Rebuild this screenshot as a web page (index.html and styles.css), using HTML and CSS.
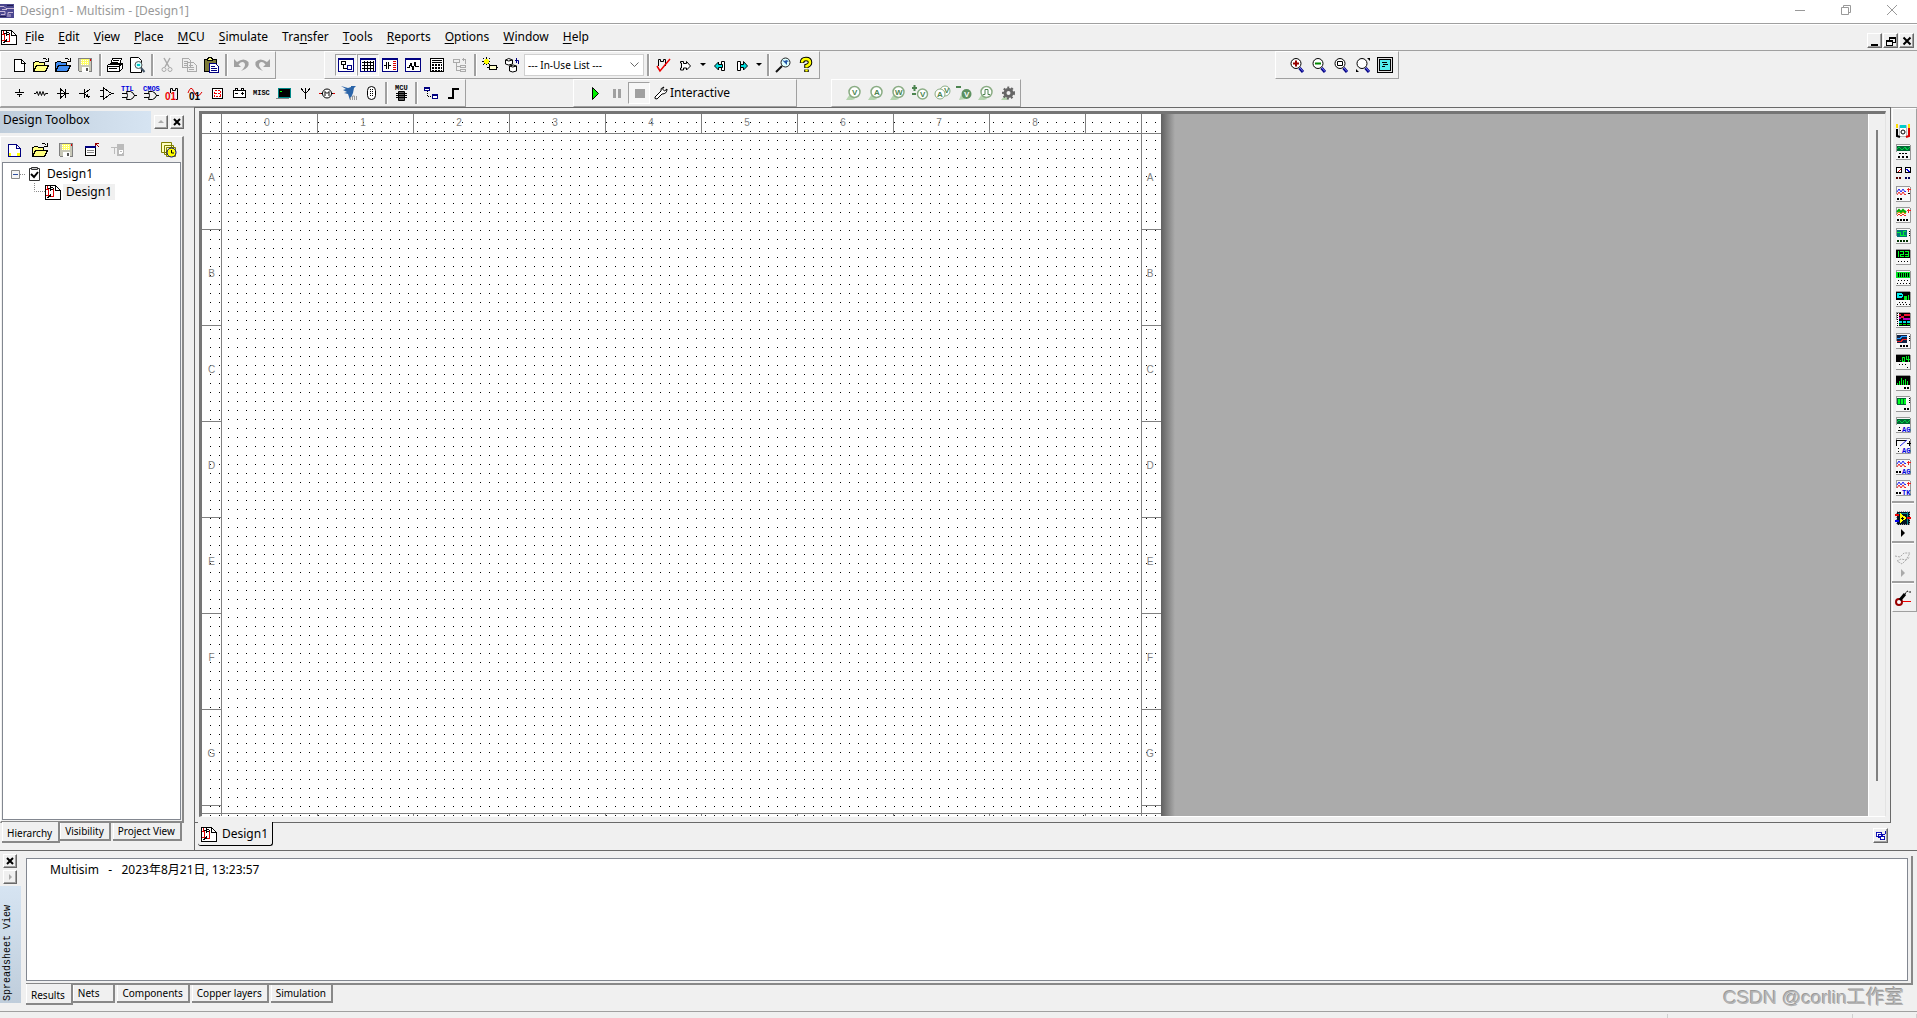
FILE: index.html
```html
<!DOCTYPE html>
<html lang="en">
<head>
<meta charset="utf-8">
<title>Design1 - Multisim - [Design1]</title>
<link rel="stylesheet" href="styles.css">
</head>
<body>
<svg class="sprite" aria-hidden="true">
  <symbol id="schematic" viewBox="0 0 16 16"><path fill="#fff" stroke="#000" d="M.5 1.500h10l5 5v9H.5z"/><path fill="none" stroke="#000" d="M10.500 1.500v5h5"/><path fill="none" stroke="#d00" d="M2.500 2v3M1 5.500h2v6H1M5 12.500h3.500v-7H6"/><path fill="none" stroke="#000" d="M3 4.500h2M5.500 2.500v4l3-2zM2.500 14l3-3M5.500 10v3"/></symbol>
  <symbol id="open" viewBox="0 0 16 16"><path d="M.5 14V5.500h1l1-1h3l1 1h5V8" stroke="#000"/><path d="M.5 14.500 3.500 8.500h12l-3 6z" stroke="#000"/><path d="M9.500 2.500q2-2 4 0l1 1M15.500 1v3.500H12" fill="none" stroke="#000"/></symbol>
  <symbol id="save" viewBox="0 0 16 16"><path fill="#c8c8b8" stroke="#808080" d="M1.500 1.500h13v13h-12l-1-1z"/><path fill="#ff6" d="M4 2h8v6H4z"/><path stroke="#fff" stroke-dasharray="1 1" d="M4 3.500h8M4 5.500h8M4 7.500h8"/><path fill="#fff" d="M5 10h7v5H5z"/><path fill="#555" d="M9 11h2v3H9z"/><path fill="#d00" d="M13 2h1v2h-1z"/></symbol>
  <symbol id="lens" viewBox="0 0 16 16"><circle cx="7" cy="6.500" r="5" fill="#fff" stroke="#000"/><path stroke="#000080" stroke-width="3" d="m10.500 11 3.500 4"/><path stroke="#77f" d="m11 11 3 3.500"/></symbol>
  <symbol id="probe" viewBox="0 0 16 16"><path fill="#b4d4ae" d="m0 15 4-6 5 5-3 1z"/><circle cx="8.500" cy="7" r="5.500" fill="#fff" stroke="#8aac84" stroke-width="1.500"/></symbol>
  <symbol id="meter" viewBox="0 0 16 16"><path fill="#f8f8f8" d="M1 1h14v14H1z"/><path fill="none" stroke="#999" d="M1 15.500h14.500V1M1 .5h14M1.500 1v7"/></symbol>
</svg>

<header class="titlebar">
  <svg class="icon" viewBox="0 0 16 16"><path fill="#4b4790" d="M0 1h14v14H0z"/><path fill="none" stroke="#c8b8d8" d="M0 3.500h4l2 2h8M0 8.500h5v3H1M8 14V9.500h5M2 6.500h5M10 14v-3"/><path stroke="#201c50" d="M0 13.500h6M7 2.500h6"/></svg>
  <h1 class="title">Design1 - Multisim - [Design1]</h1>
  <div class="window-controls">
    <button aria-label="Minimize"><svg class="icon" viewBox="0 0 16 16"><path stroke="#999" d="M3 8.500h10"/></svg></button>
    <button aria-label="Restore"><svg class="icon" viewBox="0 0 16 16"><path fill="none" stroke="#999" d="M3.500 5.500h7v7h-7zM5.500 5V3.500h7v7H11"/></svg></button>
    <button aria-label="Close"><svg class="icon" viewBox="0 0 16 16"><path stroke="#999" d="m3 3 10 10M13 3 3 13"/></svg></button>
  </div>
</header>

<nav class="menubar">
  <svg class="icon px"><use href="#schematic"/></svg>
  <ul class="menus">
    <li><button><u>F</u>ile</button></li><li><button><u>E</u>dit</button></li><li><button><u>V</u>iew</button></li><li><button><u>P</u>lace</button></li><li><button><u>M</u>CU</button></li><li><button><u>S</u>imulate</button></li><li><button>Tra<u>n</u>sfer</button></li><li><button><u>T</u>ools</button></li><li><button><u>R</u>eports</button></li><li><button><u>O</u>ptions</button></li><li><button><u>W</u>indow</button></li><li><button><u>H</u>elp</button></li>
  </ul>
  <div class="child-controls">
    <button class="bevel" aria-label="Minimize document"><svg viewBox="0 0 12 12"><path fill="#000" d="M2 9h7v2H2z"/></svg></button>
    <button class="bevel" aria-label="Restore document"><svg viewBox="0 0 12 12" class="px"><path fill="none" stroke="#000" d="M4.500 5V2.500h6v5H8M4 3h7M1.500 5.500h6v5h-6zM1 6h7"/></svg></button>
    <button class="bevel" aria-label="Close document"><svg viewBox="0 0 12 12"><path stroke="#000" stroke-width="2" d="m2.500 2.500 7 7M9.500 2.500l-7 7"/></svg></button>
  </div>
</nav>

<div class="toolrow">
  <div class="group standard" role="toolbar" aria-label="Standard">
    <button aria-label="New"><svg class="icon px" viewBox="0 0 16 16"><path fill="#fff" stroke="#000" d="M3.500 2.500h7l3 3v9h-10z"/><path fill="none" stroke="#000" d="M10.500 2v4h4"/></svg></button>
    <button aria-label="Open"><svg class="icon px" fill="#ffff80"><use href="#open"/></svg></button>
    <button aria-label="Open samples"><svg class="icon px" fill="#3f8cf3"><use href="#open"/></svg></button>
    <button aria-label="Save"><svg class="icon px"><use href="#save"/></svg></button>
    <span class="sep"></span>
    <button aria-label="Print"><svg class="icon px" viewBox="0 0 16 16"><path fill="#fff" stroke="#000" d="M5.500 1.500h9l-2 6h-9zM.5 8.500l3-2h12v5l-3 3H.5z"/><path fill="none" stroke="#000" d="M6 3.500h6M5 5.500h6M0 9.500h12.500v5M12 9.500l3-3M2 11.500h8"/></svg></button>
    <button aria-label="Print preview"><svg class="icon" viewBox="0 0 16 16"><path fill="#fff" stroke="#000" d="M1.500.5h8l3 3v12h-11z"/><circle cx="9.500" cy="8" r="3.500" fill="#cff" stroke="#555"/><path fill="#0cc" d="M8 7h3v2H8z"/><path stroke="#456" stroke-width="2" d="m12 11 3.500 4"/></svg></button>
    <span class="sep"></span>
    <button aria-label="Cut" disabled><svg class="icon" viewBox="0 0 16 16"><path fill="none" stroke="#aaa" stroke-width="1.500" d="m5 1 5 9M11 1 6 10"/><circle cx="5" cy="12.500" r="2" fill="none" stroke="#aaa"/><circle cx="11" cy="12.500" r="2" fill="none" stroke="#aaa"/></svg></button>
    <button aria-label="Copy" disabled><svg class="icon px" viewBox="0 0 16 16"><path fill="#eee" stroke="#aaa" d="M1.500 1.500h6l2 2v7h-8zM6.500 5.500h6l3 3v6h-9z"/><path stroke="#aaa" d="M3 4.500h4M3 6.500h3M3 8.500h3M8 8.500h4M8 10.500h5M8 12.500h5"/></svg></button>
    <button aria-label="Paste"><svg class="icon px" viewBox="0 0 16 16"><path fill="#7d7a38" stroke="#000" d="M1.500 2.500h12v12h-12z"/><path fill="#ff8" stroke="#000" d="M4.500 3.500v-2h1v-1h3v1h1v2z"/><path fill="#fff" stroke="#000080" d="M6.500 6.500h6l3 3v6h-9z"/><path stroke="#000080" d="M8 9.500h4M8 11.500h6M8 13.500h6"/></svg></button>
    <span class="sep"></span>
    <button aria-label="Undo" disabled><svg class="icon" viewBox="0 0 16 16"><path fill="#a0a0a0" d="M1 2v8h7L5.500 7.500Q9 3.500 11.500 6q2 3-3.500 8 9-3 7.500-9Q11 0 4 5z"/></svg></button>
    <button aria-label="Redo" disabled><svg class="icon" viewBox="0 0 16 16"><path fill="#a0a0a0" d="M15 2v8H8l2.500-2.500Q7 3.500 4.500 6q-2 3 3.500 8-9-3-7.500-9Q5 0 12 5z"/></svg></button>
  </div>
  <div class="group main-tools" role="toolbar" aria-label="Main">
    <button class="pressed" aria-label="Design Toolbox"><svg class="icon px" viewBox="0 0 16 16"><path fill="#fff" stroke="#000080" d="M.5 1.500h15v13H.5z"/><path stroke="#000080" d="M0 2.500h16"/><path fill="#fff" stroke="#000" d="M3.500 4.500h4v3h-4zM5.500 8v3.500H9"/><path fill="#fff" stroke="#000080" d="M9.500 8.500h4v4h-4z"/></svg></button>
    <button class="pressed" aria-label="Spreadsheet View"><svg class="icon px" viewBox="0 0 16 16"><path fill="#fff" stroke="#000080" d="M.5 1.500h15v13H.5z"/><path stroke="#000080" d="M0 2.500h16"/><path stroke="#000" d="M2 5.500h12M2 8.500h12M2 11.500h12M4.500 4v10M7.500 4v10M10.500 4v10M13.500 4v10"/></svg></button>
    <button aria-label="SPICE Netlist Viewer"><svg class="icon px" viewBox="0 0 16 16"><path fill="#fff" stroke="#000080" d="M.5 1.500h15v13H.5z"/><path stroke="#000080" d="M0 2.500h16"/><path stroke="#000" d="M2 8.500h2M4.500 5v7M6.500 5v7M7 8.500h2"/><path stroke="#d00" stroke-width="3" stroke-dasharray="1 1" d="M12.500 4v10"/></svg></button>
    <button class="wide" aria-label="Grapher"><svg class="icon px" viewBox="0 0 16 16"><path fill="#fff" stroke="#000080" d="M.5 1.500h15v13H.5z"/><path stroke="#000080" d="M0 2.500h16"/><path fill="none" stroke="#000" d="M2 10.500h2l2-4 2 6 2-7 1 4h3"/></svg></button>
    <button class="wide" aria-label="Postprocessor"><svg class="icon px" viewBox="0 0 16 16"><path fill="#fff" stroke="#000" d="M1.500 1.500h13v13h-13z"/><path fill="none" stroke="#000" d="M3 5.500h10M3 3.500h10"/><path stroke="#000" stroke-width="2" stroke-dasharray="2 1" d="M3 8h10M3 11h10M3 13.500h10"/></svg></button>
    <button aria-label="Parent sheet" disabled><svg class="icon px" viewBox="0 0 16 16"><path fill="none" stroke="#aaa" d="M1.500 2.500h6v3h-6zM4.500 6v7.500H8M4 9.500h4M8.500 8.500h5v2h-5zM8.500 12.500h5v2h-5zM13.500 7V2.500H10M11.500 1v3"/></svg></button>
    <span class="sep"></span>
    <button aria-label="Component wizard"><svg class="icon px" viewBox="0 0 16 16"><path stroke="#000" stroke-dasharray="2 1" d="M4.500 0v9M0 4.500h9M1 1l7 7M8 1 1 8"/><circle cx="4.500" cy="4.500" r="2.500" fill="#ff0"/><path fill="#ffc" stroke="#000" d="M7.500 8.500h7v4h-7zM5 10.500h2M15 10.500h1"/></svg></button>
    <button aria-label="Database manager"><svg class="icon" viewBox="0 0 16 16"><path fill="#fff" stroke="#000" d="M1.500 3v4q3 2 7 0V3q-4-3-7 0 3 2 7 0M5.500 9v5q3 2 7 0V9q-3-2-7 0 3 2 7 0"/><path fill="none" stroke="#000080" d="M11 3.500h3.500V7M12.500 1v5"/></svg></button>
    <select class="inuse" aria-label="In-use list"><option>--- In-Use List ---</option></select>
    <span class="sep"></span>
    <button aria-label="Electrical rules check"><svg class="icon" viewBox="0 0 16 16"><path fill="none" stroke="#000" d="M3.500 9V2.500h2v2h3v-2h2V9"/><path fill="none" stroke="#e00" stroke-width="1.500" d="m2 9 3 5L15 2"/></svg></button>
    <button class="wide" aria-label="Transfer to Ultiboard"><svg class="icon" viewBox="0 0 16 16"><path fill="#fff" stroke="#000" d="M2.500 4.500h3v2h3v-2l4 4.500-4 4v-2h-3v2h-3v-2h1v-5h-1z"/></svg></button>
    <button class="drop" aria-label="Transfer options"></button>
    <button class="wide" aria-label="Backannotate"><svg class="icon" viewBox="0 0 16 16"><path fill="#fff" stroke="#000" d="M9.500 4.500h3v9h-3z"/><path fill="#0dd" stroke="#000" d="m2.500 9 4-4v2.500h4v3h-4V13z"/></svg></button>
    <button aria-label="Forward annotate"><svg class="icon" viewBox="0 0 16 16"><path fill="#fff" stroke="#000" d="M2.500 4.500h3v9h-3z"/><path fill="#0dd" stroke="#000" d="M5.500 7.500h3V4.500l4 4.500-4 4v-2.500h-3z"/></svg></button>
    <button class="drop" aria-label="Annotate options"></button>
    <span class="sep"></span>
    <button aria-label="Find examples"><svg class="icon" viewBox="0 0 16 16"><circle cx="10.500" cy="5.500" r="4.500" fill="#dff" stroke="#222"/><path fill="#2456a8" d="m7 3 3 1 1-1 3 1-2 1v3l-2-2z"/><path stroke="#111" stroke-width="2" d="m7 9-6 6"/></svg></button>
    <button class="wide" aria-label="Help"><svg class="icon" viewBox="0 0 16 16"><path fill="none" stroke="#000" stroke-width="4.500" d="M4 6q0-4 4-4t4 3.500Q12 8 8.500 9v2M8.500 12.500V15"/><path fill="none" stroke="#ff0" stroke-width="2.500" d="M4 5.500Q4 2 8 2t4 3.500Q12 8 8.500 9v1.500M8.500 12.500v2"/></svg></button>
  </div>
  <div class="group zoom" role="toolbar" aria-label="Zoom">
    <button aria-label="Zoom in"><svg class="icon"><use href="#lens"/><path stroke="#900" stroke-width="2" d="M4 6.500h6M7 3.500v6"/></svg></button>
    <button aria-label="Zoom out"><svg class="icon"><use href="#lens"/><path stroke="#080" stroke-width="2" d="M4 6.500h6"/></svg></button>
    <button aria-label="Zoom area"><svg class="icon"><use href="#lens"/><path fill="none" stroke="#000" d="M4.500 4.500h5v4h-5z"/></svg></button>
    <button aria-label="Zoom sheet"><svg class="icon"><use href="#lens"/><path fill="#000" d="M12 1h3v3zM1 12v3h3z"/></svg></button>
    <button aria-label="Full screen"><svg class="icon px" viewBox="0 0 16 16"><path fill="#ddd" stroke="#000" d="M.5.500h15v15H.5z"/><path fill="#5ee" stroke="#000" d="M2.500 2.500h11v11h-11z"/><path stroke="#000" d="M5 5.500h5M6 7.500h5M5 9.500h3"/></svg></button>
  </div>
</div>

<div class="toolrow">
  <div class="group components" role="toolbar" aria-label="Components">
    <button aria-label="Place source"><svg class="icon px" viewBox="0 0 16 16"><path stroke="#000" d="M8.500 4v3M4 7.500h9M6 9.500h5M8.500 10v2"/></svg></button>
    <button aria-label="Place basic"><svg class="icon" viewBox="0 0 16 16"><path fill="none" stroke="#000" d="M1 8.500h2l1-2 1.500 4L7 6.500l1.500 4 1.500-4 1.500 4 1-2H15"/></svg></button>
    <button aria-label="Place diode"><svg class="icon px" viewBox="0 0 16 16"><path fill="none" stroke="#000" d="M2 8.500h12M5.500 4v9l5-4.500zM10.500 4v9"/></svg></button>
    <button aria-label="Place transistor"><svg class="icon px" viewBox="0 0 16 16"><path fill="none" stroke="#000" d="M2 8.500h5M7.500 4v9M8 8l5-4M8 9l4 4"/><path d="M10 9h1v2h2v1H9z"/></svg></button>
    <button aria-label="Place analog"><svg class="icon px" viewBox="0 0 16 16"><path fill="none" stroke="#000" d="M4.500 3v11l8-5.500zM1 5.500h3M1 11.500h3M12 8.500h3"/></svg></button>
    <button aria-label="Place TTL"><svg class="icon" viewBox="0 0 16 16"><text x="0" y="6" class="tiny blue">TTL</text><path fill="none" stroke="#000" d="M5.500 6.500h4q3 1 4 4-1 3-4 4h-4q2-4 0-8M1 8.500h5M1 12.500h5M13 10.500h3"/></svg></button>
    <button aria-label="Place CMOS"><svg class="icon" viewBox="0 0 16 16"><text x="0" y="6" class="tiny blue">CMOS</text><path fill="none" stroke="#000" d="M5.500 6.500h4q3 1 4 4-1 3-4 4h-4q2-4 0-8M1 8.500h5M1 12.500h5M13 10.500h3"/></svg></button>
    <button aria-label="Place misc digital"><svg class="icon" viewBox="0 0 16 16"><path fill="none" stroke="#000" d="M5.500 8V3.500h2v2h3v-2h2v11H11"/><text x="0" y="15" class="small red">01</text></svg></button>
    <button aria-label="Place mixed"><svg class="icon" viewBox="0 0 16 16"><path fill="none" stroke="#d00" d="M1 8q3-9 6-1t8 0"/><text x="2" y="15" class="small">01</text></svg></button>
    <button aria-label="Place indicator"><svg class="icon px" viewBox="0 0 16 16"><path fill="#fff" stroke="#000" d="M3.500 3.500h10v10h-10z"/><path fill="none" stroke="#e00" stroke-dasharray="2 1" d="M5.500 5.500h6v6h-6zM6 8.500h5"/></svg></button>
    <button aria-label="Place power"><svg class="icon px" viewBox="0 0 16 16"><path fill="#fff" stroke="#000" d="M2.500 5.500h12v7h-12zM4.500 5V3.500h2V5M10.500 5V3.500h2V5"/><path stroke="#000" d="M4 8.500h3M10 8.500h3M11.500 7v3"/></svg></button>
    <button aria-label="Place misc"><svg class="icon" viewBox="0 0 16 16"><text x="0" y="10" class="tiny">MISC</text></svg></button>
    <button aria-label="Place peripherals"><svg class="icon px" viewBox="0 0 16 16"><path stroke="#088" fill="#000" d="M3.500 3.500h12v9h-12z"/><path fill="#888" d="M1 13h13v1H1z"/><path stroke="#0f0" d="M5 6.500h2"/></svg></button>
    <button aria-label="Place RF"><svg class="icon px" viewBox="0 0 16 16"><path fill="none" stroke="#000" d="M8.500 3v11M4 3.500l4.500 5 4.500-5"/></svg></button>
    <button aria-label="Place electromechanical"><svg class="icon" viewBox="0 0 16 16"><path stroke="#d00" d="M0 8.500h2M14 8.500h2"/><circle cx="8" cy="8.500" r="4.500" fill="#fff" stroke="#000"/><path fill="none" stroke="#000" d="M2 8.500h2M12 8.500h2M6 11V6.500l2 2 2-2V11"/></svg></button>
    <button aria-label="Place NI component"><svg class="icon" viewBox="0 0 16 16"><path fill="#2a64a8" d="m0 1 7 2 3-1V1l5 0-2 2-1 5-3 7-2-6-4-1 3-1-4-2 3-1z"/><path fill="none" stroke="#999" d="M9.500 15v-3M11.500 15v-4h2v4M15.500 11v4"/></svg></button>
    <button aria-label="Place connector"><svg class="icon" viewBox="0 0 16 16"><rect x="4.500" y="1.500" width="8" height="13" rx="4" fill="#fff" stroke="#000"/><path stroke="#000" stroke-dasharray="1 1" d="M7.500 4v8M9.500 4v8"/></svg></button>
    <span class="sep"></span>
    <button aria-label="Place MCU"><svg class="icon" viewBox="0 0 16 16"><text x="2" y="5" class="tiny">MCU</text><path fill="#555" stroke="#000" d="M5.500 6.500h6v9h-6z"/><path stroke="#000" d="M3 8.500h11M3 10.500h11M3 12.500h11"/></svg></button>
    <span class="sep"></span>
    <button aria-label="Hierarchical block"><svg class="icon px" viewBox="0 0 16 16"><path fill="#fff" stroke="#000080" d="M1.500 2.500h5v3h-5zM9.500 9.500h5v4h-5z"/><path stroke="#000080" d="M1 3.500h6M9 10.500h6"/><path fill="none" stroke="#000" stroke-dasharray="1 1" d="M4.500 6v5.500H9"/></svg></button>
    <button aria-label="Place bus"><svg class="icon px" viewBox="0 0 16 16"><path fill="none" stroke="#000" stroke-width="2" d="M3 13h5V4h6"/></svg></button>
  </div>
  <div class="group simulation" role="toolbar" aria-label="Simulation">
    <button aria-label="Run"><svg class="icon" viewBox="0 0 16 16"><path fill="#0e0" stroke="#000" d="m5.500 2.500 6 6-6 6z"/></svg></button>
    <button aria-label="Pause" disabled><svg class="icon px" viewBox="0 0 16 16"><path fill="#a0a0a0" d="M4 4h3v9H4zM9 4h3v9H9z"/></svg></button>
    <button class="pressed stop" aria-label="Stop" disabled><svg class="icon px" viewBox="0 0 16 16"><path fill="#a0a0a0" d="M4 4h10v9H4z"/></svg></button>
    <button class="analysis"><svg class="icon" viewBox="0 0 16 16"><path fill="#fff" stroke="#000" d="m3 12 6-6q-1-3 3-4L10.500 4l2 2L15 4q0 5-5 5l-5 5q-3 0-2-2"/></svg>Interactive</button>
  </div>
  <div class="group probes" role="toolbar" aria-label="Probes">
    <button aria-label="Voltage probe"><svg class="icon"><use href="#probe"/><text x="6" y="10" class="letter">V</text></svg></button>
    <button aria-label="Current probe"><svg class="icon"><use href="#probe"/><text x="6" y="10" class="letter">A</text></svg></button>
    <button aria-label="Power probe"><svg class="icon"><use href="#probe"/><text x="5" y="10" class="letter">W</text></svg></button>
    <button aria-label="Differential probe"><svg class="icon"><circle cx="10.500" cy="9" r="5" fill="#fff" stroke="#8aac84" stroke-width="1.500"/><path stroke="#4c8450" stroke-width="2" d="M0 3h5M2.500 0v6M0 9h4"/><text x="8" y="12" class="letter">V</text></svg></button>
    <button aria-label="Voltage and current probe"><svg class="icon"><circle cx="11" cy="6" r="5" fill="#fff" stroke="#8aac84"/><circle cx="6" cy="9" r="5" fill="#fff" stroke="#8aac84"/><text x="3" y="12" class="letter">A</text><text x="10" y="8" class="letter">V</text></svg></button>
    <button aria-label="Reference probe"><svg class="icon"><path fill="#b4d4ae" d="m3 15 2-5 5 4z"/><circle cx="10.500" cy="9" r="5" fill="#5d9160"/><path stroke="#4c8450" stroke-width="2" d="M0 2h5"/><text x="8" y="12" class="letter white">V</text></svg></button>
    <button aria-label="Digital probe"><svg class="icon"><use href="#probe"/><path fill="none" stroke="#4c8450" d="M5 9.500h2v-5h3v5h2"/></svg></button>
    <button aria-label="Probe settings"><svg class="icon" viewBox="0 0 16 16"><path fill="#b4d4ae" d="m1 15 4-5 3 5z"/><circle cx="8.500" cy="8" r="5.500" fill="none" stroke="#666" stroke-width="2" stroke-dasharray="2 2"/><circle cx="8.500" cy="8" r="3.500" fill="none" stroke="#666" stroke-width="3"/></svg></button>
  </div>
</div>

<main class="workspace">
  <aside class="toolbox">
    <div class="toolbox-head">
      <h2 class="caption">Design Toolbox</h2>
      <button class="bevel mini" aria-label="Collapse"><svg viewBox="0 0 10 10"><path fill="#aaa" d="m2 6 3-3 3 3z"/></svg></button>
      <button class="bevel mini" aria-label="Close toolbox"><svg viewBox="0 0 10 10"><path stroke="#000" stroke-width="2" d="m2 2 6 6M8 2 2 8"/></svg></button>
    </div>
    <div class="panel">
      <div class="panel-tools">
        <button aria-label="New design"><svg class="icon px" viewBox="0 0 16 16"><path fill="#fff" stroke="#000080" d="M2.500 2.500h8l4 4v8h-12z"/><path fill="#ff0" d="M3 11h2v3H3zM11 11h3v3h-3z"/><path fill="none" stroke="#000080" d="M10.500 2v4h4"/></svg></button>
        <button aria-label="Open design"><svg class="icon px" fill="#ffff80"><use href="#open"/></svg></button>
        <button aria-label="Save design"><svg class="icon px"><use href="#save"/></svg></button>
        <button aria-label="Close design"><svg class="icon px" viewBox="0 0 16 16"><path fill="#fff" stroke="#000" d="M1.500 4.500h10v9h-10z"/><path stroke="#000080" stroke-width="2" d="M1 5h11"/><path stroke="#888" d="M3 8.500h7M3 10.500h7"/><path fill="none" stroke="#900" d="M11.500 4V1.500H15M12 2l3 3"/></svg></button>
        <button aria-label="Rename" disabled><svg class="icon px" viewBox="0 0 16 16"><path fill="#bbb" d="M7 2h7v12H7z"/><path stroke="#bbb" d="M1 5.500h6M4.500 5v7"/><path fill="none" stroke="#fff" d="M12 11.500H9.500v-3h3v1.500H9"/></svg></button>
        <button class="far" aria-label="Revision history"><svg class="icon" viewBox="0 0 16 16"><path fill="#ffffc0" stroke="#808000" d="M.5.500h10v10H.5zM3.500 3.500h9v9h-9zM5.500 5.500h9v9h-9z"/><circle cx="10.500" cy="10.500" r="4.500" fill="#ff0" stroke="#000080"/><path fill="none" stroke="#000" d="M10.500 8v3H13"/></svg></button>
      </div>
      <ul class="tree">
        <li class="node root"><svg class="twist" viewBox="0 0 15 9"><path fill="#f4f4f4" stroke="#888" d="M.5.500h8v8h-8z"/><path stroke="#3050a0" d="M2 4.500h5"/><path stroke="#888" stroke-dasharray="1 1" d="M9 4.500h6"/></svg><svg class="icon" viewBox="0 0 16 16"><path fill="#fff" stroke="#333" d="M3.500 2.500h10v12h-10z"/><path fill="#ccc" stroke="#333" d="M5.500 3.500v-2h6v2z"/><path fill="none" stroke="#000" stroke-width="2" d="m5 8 3 3 4-5"/></svg><span class="name">Design1</span></li>
        <li class="node leaf"><svg class="branch" viewBox="0 0 11 16"><path fill="none" stroke="#888" stroke-dasharray="1 1" d="M.5 0v8.500H11"/></svg><svg class="icon px"><use href="#schematic"/></svg><span class="name selected">Design1</span></li>
      </ul>
    </div>
    <div class="tabs" role="tablist">
      <button class="tab active" role="tab" aria-selected="true">Hierarchy</button><button class="tab" role="tab">Visibility</button><button class="tab" role="tab">Project View</button>
    </div>
  </aside>

  <section class="document">
    <div class="frame">
      <div class="view">
        <div class="canvas">
          <div class="sheet">
            <div class="corner"></div>
            <div class="ruler across"><span>0</span><span>1</span><span>2</span><span>3</span><span>4</span><span>5</span><span>6</span><span>7</span><span>8</span></div>
            <div class="corner end"></div>
            <div class="ruler down"><span>A</span><span>B</span><span>C</span><span>D</span><span>E</span><span>F</span><span>G</span></div>
            <div class="drawing"></div>
            <div class="ruler down end"><span>A</span><span>B</span><span>C</span><span>D</span><span>E</span><span>F</span><span>G</span></div>
            <div class="corner"></div>
            <div class="ruler across"><span></span><span></span><span></span><span></span><span></span><span></span><span></span><span></span><span></span></div>
            <div class="corner end"></div>
          </div>
          <div class="shade"></div>
        </div>
        <div class="scroll"><div class="rail"></div></div>
      </div>
    </div>
    <div class="doc-tabs">
      <button class="doc-tab"><svg class="icon px"><use href="#schematic"/></svg>Design1</button>
      <button class="bevel windows" aria-label="Window list"><svg class="px" viewBox="0 0 13 13"><path fill="#fff" stroke="#0000b0" d="M1.500 2.500h5v4h-5zM3.500 4.500h5v4h-5z"/><path fill="#fff" stroke="#0000b0" d="M5.500 6.500h5v4h-5z"/><path stroke="#0000b0" d="M5 7.500h6M9 4.500h2M11.500 1v3"/></svg></button>
    </div>
  </section>

  <aside class="instruments" role="toolbar" aria-label="Instruments">
    <div class="rack">
      <button aria-label="Multimeter"><svg class="icon" viewBox="0 0 16 16"><path fill="#fff" stroke="#bbb" d="M4.500 2.500h7v11h-7z"/><path fill="#0cc" d="M5 2h6v3H5z"/><circle cx="8" cy="9" r="2" fill="none" stroke="#000"/><path fill="none" stroke="#000" stroke-width="2" d="M2 6v7l3 1"/><path stroke="#fd0" stroke-width="2" d="M2 1v4M14 1v4"/><path fill="none" stroke="#d00" stroke-width="2" d="M14 5v8l-3 1"/></svg></button>
      <button aria-label="Function generator"><svg class="icon px"><use href="#meter"/><path fill="#063" d="M2 2h13v5H2z"/><path fill="none" stroke="#0c4" d="m2 5 2-2 3 3 3-3 2 3 3-3"/><path stroke="#000" stroke-dasharray="2 1" d="M4 9.500h9"/><path stroke="#000" stroke-width="2" stroke-dasharray="2 2" d="M3 13h11"/></svg></button>
      <button aria-label="Wattmeter"><svg class="icon px" viewBox="0 0 16 16"><path fill="#fff" stroke="#000" d="M1.500 2.500h5v5h-5zM10.500 2.500h5v5h-5z"/><path stroke="#d00" d="m3 7 3-3"/><path stroke="#00d" d="m11 4 4 3"/><path stroke="#500" stroke-width="2" stroke-dasharray="2 1" d="M1 13h5"/><path stroke="#005" stroke-width="2" stroke-dasharray="2 1" d="M10 13h5"/></svg></button>
      <button aria-label="Oscilloscope"><svg class="icon"><use href="#meter"/><path fill="none" stroke="#22e" d="m2 6 2-3 2 3 2-3 2 3 1-1"/><path fill="none" stroke="#e22" d="m2 9 2-3 2 3 2-3 2 3 1-1M12 3.500h4M13.500 2v4"/><path stroke="#000" stroke-width="2" stroke-dasharray="2 1" d="M2 13h5"/><path stroke="#000" d="M13 7.500h2"/></svg></button>
      <button aria-label="Four channel oscilloscope"><svg class="icon"><use href="#meter"/><path fill="none" stroke="#0a0" stroke-width="2" d="m2 5 2-2 2 2 2-2 2 2 1-1"/><path fill="none" stroke="#e80" d="m2 7 2-2 2 2 2-2 2 2 1-1"/><path fill="none" stroke="#e22" d="m2 9 2-2 2 2 2-2 2 2 1-1M12 3.500h4M13.500 2v4"/><path stroke="#000" stroke-width="2" stroke-dasharray="2 1" d="M2 13h12"/></svg></button>
      <button aria-label="Bode plotter"><svg class="icon px"><use href="#meter"/><path fill="#077" d="M2 2h10v7H2z"/><path fill="none" stroke="#0e3" d="M2 4.500h3v3h3v-4h3M8 7.500h3"/><path stroke="#000" stroke-dasharray="1 1" d="M14.500 3v5"/><path stroke="#030" stroke-width="2" stroke-dasharray="2 1" d="M2 13h12"/></svg></button>
      <button aria-label="Frequency counter"><svg class="icon px"><use href="#meter"/><path d="M1 1h14v8H1z"/><path fill="none" stroke="#0f2" d="M3.500 2v6M5 2.500h3.500v3h-3v2H9M10 2.500h3.500v5H10M10 5.500h3"/><path stroke="#000" stroke-dasharray="1 2" d="M3 12.500h11"/></svg></button>
      <button aria-label="Word generator"><svg class="icon px"><use href="#meter"/><path fill="#0d2" d="M1 2h14v6H1z"/><path stroke="#000" stroke-width="4" stroke-dasharray="1 1" d="M3 5h11"/><path stroke="#000" stroke-dasharray="1 2" d="M3 10.500h11M2 13.500h13"/></svg></button>
      <button aria-label="Logic converter"><svg class="icon px"><use href="#meter"/><path d="M1 1h14v8H1z"/><path fill="none" stroke="#0ee" stroke-width="1.500" d="M2 3h4q3 2 0 3H3V3"/><path fill="#0e2" d="M9 5h3v4H9zM13 4h1v5h-1z"/><path stroke="#000" stroke-dasharray="1 2" d="M4 11.500h9M2 13.500h13"/></svg></button>
      <button aria-label="Logic analyzer"><svg class="icon px"><use href="#meter"/><path d="M4 1h11v13H4z"/><path stroke="#e13" stroke-width="2" d="M4 3h2M9 3h6M6 5h3"/><path stroke="#b0b" stroke-width="2" d="M4 6h2M8 7h7"/><path stroke="#0dd" stroke-width="2" stroke-dasharray="3 1" d="M4 10h11"/><path stroke="#0d0" stroke-dasharray="3 1" d="M4 12.500h11"/><path stroke="#000" stroke-dasharray="1 1" d="M2.500 1v13"/></svg></button>
      <button aria-label="IV analyzer"><svg class="icon px"><use href="#meter"/><path fill="#124" d="M2 2h10v8H2z"/><path fill="none" stroke="#29f" d="M2 5.500h3l2-2h5"/><path fill="none" stroke="#e22" d="M2 8.500h4l2-2h4"/><path stroke="#000" stroke-dasharray="1 1" d="M14.500 3v5"/><path stroke="#000" stroke-width="2" stroke-dasharray="2 1" d="M5 13h9"/></svg></button>
      <button aria-label="Distortion analyzer"><svg class="icon px"><use href="#meter"/><path d="M1 1h14v7H1z"/><path fill="none" stroke="#0e2" d="M5 6.500h1M7.500 3v4h2V3zM11.500 2v3h3M13.500 2v6"/><path stroke="#000" stroke-dasharray="1 2" d="M4 10.500h8M12 13.500h3"/></svg></button>
      <button aria-label="Spectrum analyzer"><svg class="icon px"><use href="#meter"/><path d="M1 1h14v9H1z"/><path stroke="#0e2" d="M2.500 8v2M4.500 6v4M6.500 3v7M8.500 5v5M10.500 4v6M12.500 6v4"/><path stroke="#000" stroke-width="2" stroke-dasharray="2 1" d="M9 13h5"/></svg></button>
      <button aria-label="Network analyzer"><svg class="icon px"><use href="#meter"/><path fill="#063" d="M2 2h9v7H2z"/><path stroke="#0f2" stroke-width="5" stroke-dasharray="2 1" d="M3 5.500h8"/><path stroke="#000" stroke-dasharray="1 1" d="M14.500 2v6"/><path stroke="#000" stroke-width="2" stroke-dasharray="2 1" d="M9 13h5"/></svg></button>
      <button aria-label="Agilent function generator"><svg class="icon"><use href="#meter"/><path fill="#063" d="M2 2h13v5H2z"/><path fill="none" stroke="#0c4" d="m2 5 2-2 3 3 3-3 2 3 3-3"/><text x="7" y="15" class="tiny blue">AG</text><path d="M4 10h1v1H4zM3 13h3v1H3z"/></svg></button>
      <button aria-label="Agilent multimeter"><svg class="icon"><use href="#meter"/><path fill="none" stroke="#000" d="M2 2.500h9M1.500 2v6"/><path stroke="#22e" d="m5 8 7-6"/><path stroke="#000" d="M12 5.500h4M14.500 3v5"/><text x="7" y="15" class="tiny blue">AG</text><path d="M3 10h1v1H3zM3 13h1v1H3z"/></svg></button>
      <button aria-label="Agilent oscilloscope"><svg class="icon"><use href="#meter"/><path fill="none" stroke="#22e" d="m2 5 2-3 2 3 2-3 2 3 1-1"/><path fill="none" stroke="#e22" d="m2 8 2-3 2 3 2-3 2 3 1-1M12 3.500h4M13.500 2v4"/><text x="7" y="15" class="tiny blue">AG</text><path stroke="#000" stroke-width="2" stroke-dasharray="2 1" d="M1 13h5"/></svg></button>
      <button aria-label="Tektronix oscilloscope"><svg class="icon"><use href="#meter"/><path fill="none" stroke="#22e" d="m2 5 2-3 2 3 2-3 2 3 1-1"/><path fill="none" stroke="#e22" d="m2 8 2-3 2 3 2-3 2 3 1-1M12 3.500h4M13.500 2v4"/><text x="7" y="15" class="tiny blue">TK</text><path stroke="#000" stroke-width="2" stroke-dasharray="2 1" d="M1 13h5"/></svg></button>
      <span class="hsep"></span>
      <button aria-label="LabVIEW instruments"><svg class="icon px" viewBox="0 0 16 16"><path fill="#012" stroke="#999" stroke-dasharray="1 1" d="M1.500 1.500h13v13h-13z"/><path stroke="#088" d="M12.500 2v12M3 3.500h9"/><path fill="#ff0" d="m5 3 7 5-7 5z"/><path stroke="#000" d="M6 8.500h3M7.500 7v3"/><path stroke="#e00" stroke-width="2" d="M0 5h4M12 8h4"/><path stroke="#00e" stroke-width="2" d="M0 11h4"/></svg></button>
      <button class="flyout" aria-label="More LabVIEW instruments"><svg viewBox="0 0 8 8"><path d="M2 0v8l4-4z"/></svg></button>
      <span class="hsep"></span>
      <button aria-label="ELVISmx instruments" disabled><svg class="icon" viewBox="0 0 16 16"><path fill="none" stroke="#aaa" stroke-dasharray="2 1" d="m0 6 5 1 4-4 6 0-4 7-4 4-5-3 4-2 5 1 4-3"/></svg></button>
      <button class="flyout" aria-label="More ELVISmx instruments" disabled><svg viewBox="0 0 8 8"><path fill="#aaa" d="M2 0v8l4-4z"/></svg></button>
      <span class="hsep"></span>
      <button aria-label="Current clamp"><svg class="icon" viewBox="0 0 16 16"><path stroke="#e00" d="M7 11.500h9"/><circle cx="4" cy="12" r="3" fill="#fff" stroke="#900" stroke-width="2"/><path stroke="#000" stroke-width="3" d="m5 10 5-6"/><path fill="none" stroke="#000" stroke-dasharray="2 1" d="m10 4 2-3 2 1h2"/></svg></button>
    </div>
  </aside>
</main>

<section class="spreadsheet">
  <div class="side">
    <button class="bevel mini" aria-label="Close spreadsheet"><svg viewBox="0 0 10 10"><path stroke="#000" stroke-width="2" d="m2 2 6 6M8 2 2 8"/></svg></button>
    <button class="bevel mini" aria-label="Expand"><svg viewBox="0 0 10 10"><path fill="#aaa" d="M4 2v6l3-3z"/></svg></button>
    <h2 class="vcaption">Spreadsheet View</h2>
  </div>
  <div class="results">
    <div class="output"><p class="log">Multisim&nbsp;&nbsp; -&nbsp;&nbsp; 2023年8月21日, 13:23:57</p></div>
    <div class="tabs" role="tablist">
      <button class="tab active" role="tab" aria-selected="true">Results</button><button class="tab nets" role="tab">Nets</button><button class="tab" role="tab">Components</button><button class="tab" role="tab">Copper layers</button><button class="tab" role="tab">Simulation</button>
    </div>
    <p class="watermark">CSDN @corlin工作室</p>
  </div>
</section>
<footer class="status"><span></span><span></span><span></span></footer>
</body>
</html>
```
FILE: styles.css
```css
* { box-sizing: border-box; }

body {
  margin: 0;
  height: 100vh;
  display: flex;
  flex-direction: column;
  overflow: hidden;
  background: #f0f0f0;
  color: #000;
  font: 12px/16px "Noto Sans", "Noto Sans CJK SC", sans-serif;
}

h1, h2, p, ul { margin: 0; padding: 0; font: inherit; list-style: none; }

button {
  margin: 0;
  padding: 0;
  border: 0;
  background: none;
  color: inherit;
  font: inherit;
  display: flex;
  align-items: center;
  justify-content: center;
}

svg { display: block; flex: none; overflow: visible; }
.icon { width: 16px; height: 16px; }
.px { shape-rendering: crispEdges; }
.sprite { position: absolute; width: 0; height: 0; }

.tiny { font: bold 7px "Liberation Mono", monospace; }
.small { font: bold 10px "Liberation Sans", sans-serif; }
.letter { font: bold 8px "Liberation Sans", sans-serif; fill: #4c8450; }
.blue { fill: #00d; }
.red { fill: #e00; }
.white { fill: #fff; }

/* Title bar and menus */
.titlebar {
  height: 24px;
  flex: none;
  display: flex;
  align-items: center;
  gap: 4px;
  padding-bottom: 1px;
  background: #fff;
  border-bottom: 1px solid #a0a0a0;
}
.title { flex: 1; color: #999; }
.window-controls { display: flex; gap: 30px; padding-right: 17px; margin-bottom: 2px; }

.menubar {
  height: 27px;
  flex: none;
  display: flex;
  align-items: center;
  padding: 0 3px 2px 1px;
  border-top: 1px solid #fff;
  border-bottom: 1px solid #a0a0a0;
}
.menus { flex: 1; display: flex; gap: 14px; padding-left: 8px; }
.menus u { text-underline-offset: 2px; }
.child-controls { display: flex; gap: 1px; align-self: flex-end; }

.bevel {
  width: 15px;
  height: 15px;
  background: #f0f0f0;
  border: 1px solid;
  border-color: #fff #696969 #696969 #fff;
  box-shadow: inset -1px -1px #a0a0a0;
}
.bevel svg { width: 12px; height: 12px; }
.mini { width: 14px; height: 14px; }
.mini svg { width: 10px; height: 10px; }

/* Toolbars */
.toolrow { height: 28px; flex: none; display: flex; align-items: flex-start; }
.group {
  display: flex;
  align-items: center;
  height: 28px;
  padding-bottom: 1px;
  border: 1px solid;
  border-color: #fff #a0a0a0 #a0a0a0 #fff;
}
.group button { width: 22px; height: 22px; }
.group .wide { width: 24px; }
.group .pressed {
  border: 1px solid;
  border-color: #a0a0a0 #fff #fff #a0a0a0;
  background: #f6f6f6;
}
.group .drop { width: 10px; }
.drop::before { content: ""; border: 3px solid transparent; border-top-color: #000; border-bottom: 0; }
.sep { width: 8px; height: 22px; display: flex; justify-content: center; }
.sep::before { content: ""; width: 2px; background: #a0a0a0; border-right: 1px solid #fff; }
.standard { width: 276px; padding-left: 7px; }
.components { width: 466px; padding-left: 7px; }
.main-tools { width: 496px; margin-left: 48px; padding-left: 10px; }
.zoom { width: 124px; margin-left: 455px; padding-left: 10px; }
.simulation { width: 224px; margin-left: 107px; padding-left: 10px; }
.probes { width: 190px; margin-left: 34px; padding-left: 11px; }
.group .analysis { width: auto; gap: 2px; padding-left: 2px; }

.inuse {
  width: 120px;
  height: 22px;
  margin-left: 1px;
  padding: 0 3px;
  appearance: none;
  border: 1px solid #d0d0d0;
  border-radius: 0;
  background: #fff url("data:image/svg+xml,%3Csvg xmlns='http://www.w3.org/2000/svg' width='9' height='6'%3E%3Cpath d='M.5.500l4 4 4-4' fill='none' stroke='%23666'/%3E%3C/svg%3E") no-repeat right 4px center;
  color: #000;
  font: 10px/16px "Noto Sans", sans-serif;
}

/* Workspace */
.workspace { flex: 1; min-height: 0; display: flex; }

.toolbox {
  width: 194px;
  flex: none;
  display: flex;
  flex-direction: column;
  padding: 3px 10px 7px 0;
  border-top: 1px solid #a0a0a0;
}
.toolbox-head { display: flex; align-items: center; gap: 2px; padding-bottom: 3px; }
.caption {
  width: 151px;
  height: 22px;
  padding: 0 3px;
  line-height: 18px;
  background: linear-gradient(90deg, #bfcddb, #d6e4f2);
}
.caption + .mini { margin-left: 1px; }
.panel {
  flex: 1;
  min-height: 0;
  display: flex;
  flex-direction: column;
  padding-left: 2px;
  border-top: 1px solid #fff;
  border-left: 1px solid #fff;
  border-right: 2px solid #888;
  border-bottom: 2px solid #888;
}
.panel-tools { display: flex; gap: 10px; padding: 5px 5px 4px 3px; }
.far { margin-left: auto; }
.tree {
  flex: 1;
  margin: 0 1px 1px -1px;
  padding: 2px 0 0 8px;
  border: 1px solid #828790;
  background: #fff;
}
.node { display: flex; align-items: center; height: 18px; }
.twist { width: 15px; height: 9px; }
.branch { width: 11px; height: 16px; align-self: flex-start; }
.leaf { padding-left: 23px; }
.name { padding: 0 3px; margin-left: 2px; }
.selected { background: #f0f0f0; }

.tabs { display: flex; align-items: flex-start; }
.tab {
  height: 18px;
  padding: 0 5px;
  border: solid #888;
  border-width: 0 2px 2px 0;
  box-shadow: inset 1px 0 #fff;
  margin-right: 2px;
  font: 10px/16px "Noto Sans", sans-serif;
  white-space: nowrap;
}
.tab.active { height: 21px; padding: 2px 6px 0 5px; background: #f0f0f0; margin: -1px 0 0 0; }
.toolbox .tabs { padding-left: 2px; }

.document {
  flex: 1;
  min-width: 0;
  display: flex;
  flex-direction: column;
  border-left: 1px solid #696969;
}
.frame {
  flex: 1;
  min-height: 0;
  display: flex;
  padding: 3px 4px 5px;
  border: solid #696969;
  border-width: 1px 1px 1px 0;
}
.view {
  flex: 1;
  min-width: 0;
  display: flex;
  border: solid;
  border-color: #757575 #e3e3e3 #fff #757575;
  border-width: 3px 1px 1px 3px;
}
.canvas { flex: 1; min-width: 0; display: flex; overflow: hidden; background: #ababab; }
.sheet {
  width: 959px;
  height: 720px;
  flex: none;
  display: grid;
  grid-template-columns: 20px 920px 19px;
  grid-template-rows: 20px 680px 20px;
  background: conic-gradient(from 270deg at 1px 1px, #000 90deg, transparent 0) 8px 8px / 9px 9px, #fff;
  color: #808080;
  font: 10px/12px "Liberation Sans", sans-serif;
}
.corner, .ruler, .drawing { border: solid #808080; border-width: 0 1px 1px 0; }
.end { border-right: 0; }
.ruler { display: flex; }
.ruler span { display: flex; align-items: center; justify-content: center; flex: none; }
.across span { width: 96px; border-right: 1px solid #808080; padding: 0 5px 2px 0; }
.down { flex-direction: column; }
.down span { height: 96px; border-bottom: 1px solid #808080; padding-bottom: 7px; }
.down.end span { padding-right: 3px; }
.shade { width: 14px; height: 720px; flex: none; background: linear-gradient(90deg, #606060, #ababab); }
.scroll {
  width: 17px;
  flex: none;
  display: flex;
  justify-content: center;
  padding: 16px 0 35px;
  border-left: 1px solid #fff;
}
.rail { width: 2px; background: #808080; }

.doc-tabs { height: 27px; flex: none; display: flex; justify-content: space-between; padding: 0 3px; }
.doc-tab {
  height: 24px;
  margin-top: -1px;
  gap: 5px;
  padding: 0 4px 0 3px;
  border: solid #000;
  border-width: 0 1px 1px 0;
  border-radius: 0 0 3px 3px;
  background: #f0f0f0;
}
.windows { margin-top: 5px; }

.instruments { width: 26px; flex: none; border-top: 1px solid #a0a0a0; }
.rack {
  padding: 11px 6px 3px 3px;
  margin-left: 1px;
  border: 1px solid;
  border-color: #fff #a0a0a0 #a0a0a0 #fff;
  display: flex;
  flex-direction: column;
}
.rack button { height: 21px; }
.rack .flyout { height: 10px; }
.flyout svg { width: 8px; height: 8px; }
.hsep { height: 9px; margin: 0 -4px; display: flex; align-items: center; }
.hsep::before { content: ""; flex: 1; height: 2px; background: #a0a0a0; border-bottom: 1px solid #fff; }

/* Spreadsheet view */
.spreadsheet { flex: none; display: flex; padding: 3px 4px 6px 0; border-top: 1px solid #696969; }
.side { width: 26px; flex: none; display: flex; flex-direction: column; gap: 2px; }
.side .mini { margin-left: 3px; }
.vcaption {
  flex: 1;
  width: 21px;
  margin-bottom: 2px;
  padding: 2px 1px;
  writing-mode: vertical-rl;
  rotate: 180deg;
  text-align: left;
  background: linear-gradient(0deg, #d6e4f2, #bfcddb);
  font: 10px/14px "Liberation Mono", monospace;
}
.results { flex: 1; position: relative; display: flex; flex-direction: column; min-width: 0; padding-top: 2px; }
.output {
  height: 129px;
  padding: 2px 3px 3px 0;
  border: solid #888;
  border-width: 0 2px 2px 0;
}
.log { height: 123px; border: 1px solid #828790; background: #fff; padding: 3px 23px; }
.nets { padding-right: 14px; }
.watermark {
  position: absolute;
  right: 9px;
  bottom: -5px;
  color: #b4b4b4;
  font: 19px/24px "Liberation Sans", "Noto Sans CJK SC", sans-serif;
  text-shadow: -1px -1px #999;
}

.status { height: 7px; flex: none; display: flex; gap: 2px; border-top: 1px solid #a0a0a0; padding-top: 2px; }
.status span { border-right: 1px solid #d0d0d0; width: 183px; }
.status span:first-child { flex: 1; }
.status span:last-child { width: 62px; }
```
